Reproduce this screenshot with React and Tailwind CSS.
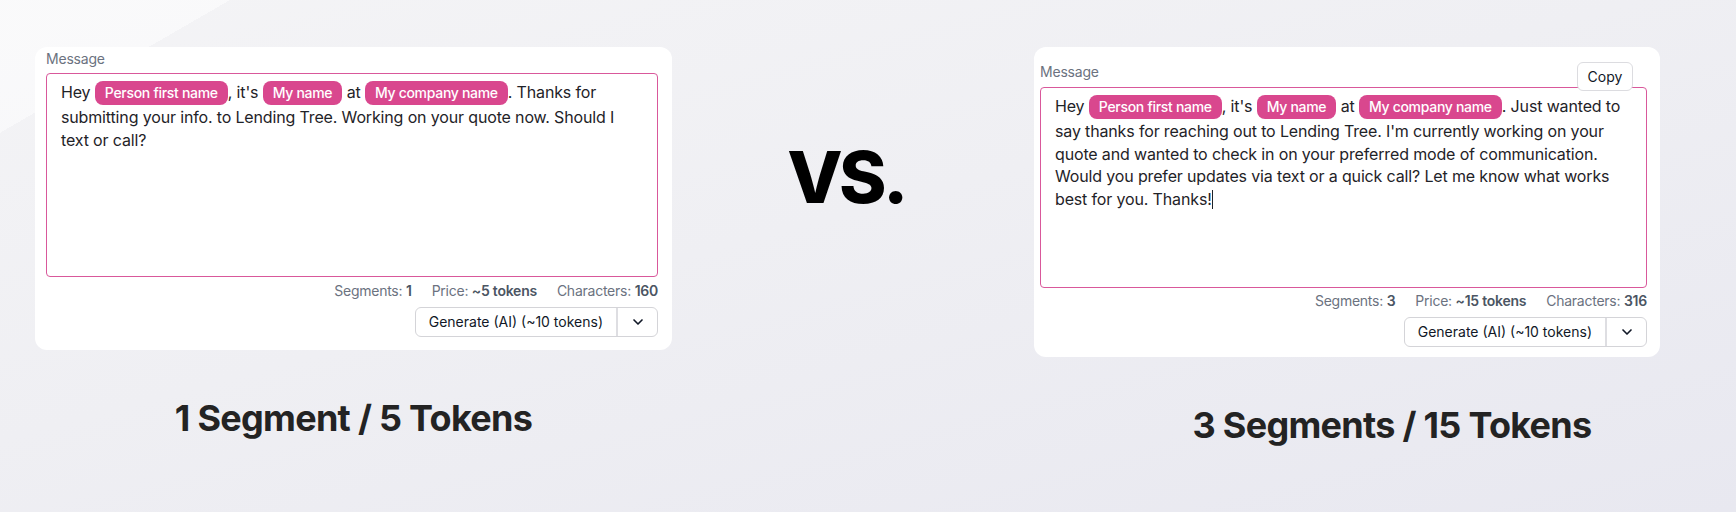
import React from "react";
import { ChevronDown } from "lucide-react";

function Chip({ children }) {
  return (
    <span className="inline-block h-6 leading-6 my-px px-[10px] rounded-lg bg-[#d9478e] text-white text-sm font-medium tracking-[-0.3px] align-baseline">
      {children}
    </span>
  );
}

function Stats({ seg, price, chars, className }) {
  return (
    <div className={"flex justify-end gap-5 text-sm leading-5 tracking-[-0.25px] text-[#6b7280] " + className}>
      <span>
        Segments: <b className="font-semibold text-[#4b5563]">{seg}</b>
      </span>
      <span>
        Price: <b className="font-semibold text-[#4b5563]">{price}</b>
      </span>
      <span>
        Characters: <b className="font-semibold text-[#4b5563]">{chars}</b>
      </span>
    </div>
  );
}

function GenButton({ className }) {
  return (
    <div className={"flex justify-end " + className}>
      <div className="flex h-[30px] border border-[#d4d4d8] rounded-md bg-white text-sm text-[#111827]">
        <div className="flex items-center px-[13px]">Generate (AI) (~10 tokens)</div>
        <div className="flex items-center justify-center w-[41px] border-l-2 border-[#dedee2]">
          <ChevronDown size={16} strokeWidth={2.5} />
        </div>
      </div>
    </div>
  );
}

function Intro() {
  return (
    <>
      Hey <Chip>Person first name</Chip>, it's <Chip>My name</Chip> at <Chip>My company name</Chip>.
    </>
  );
}

export default function App() {
  return (
    <div className="relative w-[1736px] h-[512px] overflow-hidden font-[Inter,sans-serif] bg-[linear-gradient(150deg,rgba(255,255,255,0.5)_115px,transparent_115px),linear-gradient(165deg,#f4f4f6_0%,#efeff3_45%,#e8e8f0_100%)]">
      <div className="flex items-start pt-[47px] pl-[35px]">
        {/* Left */}
        <div className="w-[637px] flex flex-col">
          <div className="bg-white rounded-xl pt-[2px] pl-[11px] pr-[14px] pb-[13px]">
            <div className="text-sm leading-5 tracking-[-0.2px] text-[#6b7280]">Message</div>
            <div className="mt-[4px] h-[204px] border border-[#d9589b] rounded pt-[6px] px-[14px] text-base leading-[22.5px] tracking-[-0.15px] text-[#1f2328]">
              <Intro /> Thanks for submitting your info. to Lending Tree. Working on your quote now. Should I text or call?
            </div>
            <Stats seg="1" price="~5 tokens" chars="160" className="mt-[4px]" />
            <GenButton className="mt-[6px]" />
          </div>
          <div className="mt-[50px] text-center text-[36px] leading-none font-bold tracking-[-0.02em] text-[#232323]">
            1 Segment / 5 Tokens
          </div>
        </div>

        {/* Middle */}
        <div className="w-[362px] flex justify-center pr-[14px] pt-[94px]">
          <div className="text-[72px] leading-none font-extrabold tracking-[-0.05em] text-black">VS.</div>
        </div>

        {/* Right */}
        <div className="w-[626px] flex flex-col">
          <div className="bg-white rounded-xl pt-[15px] pl-[6px] pr-[13px] pb-[10px]">
            <div className="flex items-start justify-between">
              <div className="text-sm leading-5 tracking-[-0.2px] text-[#6b7280]">Message</div>
              <div className="relative z-10 mr-[14px] -mb-[9px] flex items-center justify-center w-[56px] h-[29px] bg-white border border-[#dcdce0] rounded-md text-sm text-[#111827]">
                Copy
              </div>
            </div>
            <div className="mt-[5px] h-[201px] border border-[#d9589b] rounded pt-[6px] px-[14px] text-base leading-[22.5px] tracking-[-0.15px] text-[#1f2328]">
              <Intro /> Just wanted to say thanks for reaching out to Lending Tree. I'm currently working on your quote and wanted to check in on your preferred mode of communication. Would you prefer updates via text or a quick call? Let me know what works best for you. Thanks!
              <span className="inline-block w-px h-[19px] bg-[#1f2328] align-[-4px]" />
            </div>
            <Stats seg="3" price="~15 tokens" chars="316" className="mt-[3px]" />
            <GenButton className="mt-[6px]" />
          </div>
          <div className="mt-[50px] pl-[90px] text-center text-[36px] leading-none font-bold tracking-[-0.02em] text-[#232323]">
            3 Segments / 15 Tokens
          </div>
        </div>
      </div>
    </div>
  );
}
